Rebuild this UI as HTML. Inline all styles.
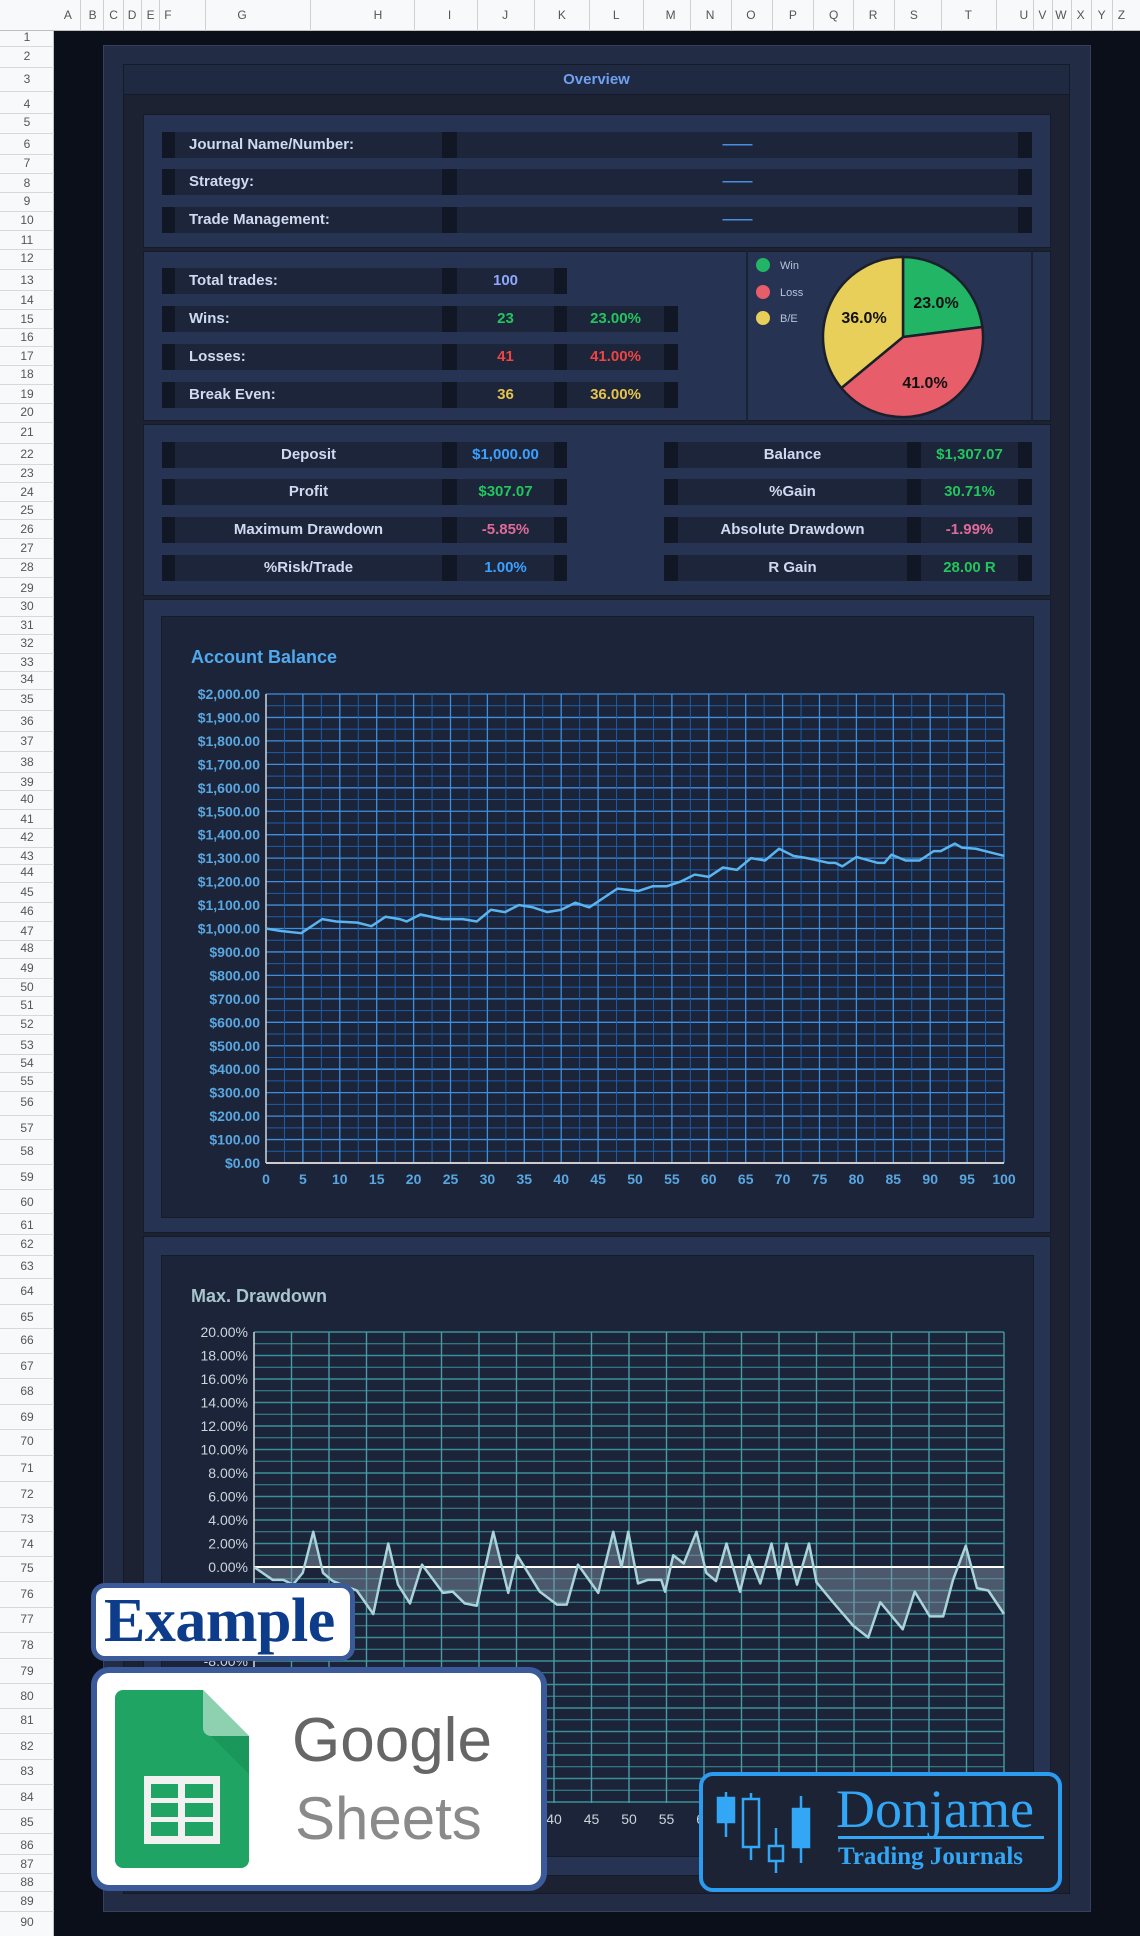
<!DOCTYPE html>
<html><head><meta charset="utf-8">
<style>
*{margin:0;padding:0;box-sizing:border-box}
body{width:1140px;height:1936px;overflow:hidden;background:#0b0f19;font-family:"Liberation Sans",Arial,sans-serif;position:relative}
.a{position:absolute}
.hdr{left:0;top:0;width:1140px;height:31px;background:#f8f9fa;border-bottom:1px solid #c0c0c0}
.rn{left:0;top:31px;width:54px;height:1905px;background:#f8f9fa;border-right:1px solid #c0c0c0}
.cl{font-size:12px;color:#555;top:8px;transform:translateX(-50%)}
.rl{font-size:12px;color:#555;width:54px;text-align:center;transform:translateY(-50%)}
.cap{background:#111725}
.cell{background:#1c2539}
.lbl{color:#cfdaf0;font-weight:bold;font-size:15px;line-height:26px}
.v{font-weight:bold;font-size:15px;line-height:26px;text-align:center}
</style></head><body>
<div class="a hdr" id="hdr"></div>
<div class="a rn" id="rn"></div>
<div class="a" style="left:103px;top:45px;width:988px;height:1867px;background:#222c44;border:1px solid #34405e"></div>
<div class="a" style="left:123px;top:64px;width:947px;height:1830px;background:#1c2232;border:1px solid #151a26"></div>
<div class="a" style="left:123px;top:64px;width:947px;height:31px;background:#1f2a42;border:1px solid #141a28;color:#6ea0f0;font-weight:bold;font-size:15px;text-align:center;line-height:30px">Overview</div>
<div class="a" style="left:143px;top:114px;width:908px;height:134px;background:#263352;border:1px solid #151b29"></div>
<div class="a" style="left:143px;top:251px;width:908px;height:170px;background:#263352;border:1px solid #151b29"></div>
<div class="a" style="left:746px;top:251px;width:2px;height:170px;background:#1a2236"></div>
<div class="a" style="left:1031px;top:251px;width:2px;height:170px;background:#1a2236"></div>
<div class="a" style="left:143px;top:424px;width:908px;height:172px;background:#263352;border:1px solid #151b29"></div>
<div class="a" style="left:143px;top:599px;width:908px;height:634px;background:#263352;border:1px solid #151b29"></div>
<div class="a" style="left:143px;top:1236px;width:908px;height:640px;background:#263352;border:1px solid #151b29"></div>
<div class="a" style="left:161px;top:616px;width:873px;height:602px;background:#1b2439;border:1px solid #151b29"></div>
<div class="a" style="left:161px;top:1255px;width:873px;height:602px;background:#1b2439;border:1px solid #151b29"></div>
<div id="rows"></div>
<svg class="a" style="left:0;top:0" width="1140" height="1936" id="sv" font-family="Liberation Sans, Arial, sans-serif"></svg>

<div class="a" style="left:91px;top:1583px;width:264px;height:78px;background:#fff;border:5px solid #3b5a9a;border-radius:14px;font-family:'Liberation Serif',serif;font-weight:bold;font-size:62px;color:#0d3d8a;line-height:66px;padding-left:8px;letter-spacing:-0.5px">Example</div>
<div class="a" style="left:91px;top:1667px;width:456px;height:224px;background:#fff;border:6px solid #3b5a9a;border-radius:18px"></div>
<svg class="a" style="left:115px;top:1690px" width="136" height="180" viewBox="0 0 136 180">
<path d="M8 0 H88 L134 46 V170 a8 8 0 0 1 -8 8 H8 a8 8 0 0 1 -8 -8 V8 a8 8 0 0 1 8 -8z" fill="#1fa463"/>
<path d="M88 0 V38 a8 8 0 0 0 8 8 H134z" fill="#8ed1b1"/>
<path d="M96 46 L134 84 V46z" fill="#178f55" opacity=".6"/>
<rect x="29" y="86" width="76" height="68" fill="#f1f1f1"/>
<rect x="36" y="94" width="27" height="14" fill="#1fa463"/><rect x="70" y="94" width="28" height="14" fill="#1fa463"/>
<rect x="36" y="113" width="27" height="14" fill="#1fa463"/><rect x="70" y="113" width="28" height="14" fill="#1fa463"/>
<rect x="36" y="132" width="27" height="14" fill="#1fa463"/><rect x="70" y="132" width="28" height="14" fill="#1fa463"/>
</svg>
<div class="a" style="left:292px;top:1706px;font-size:62px;color:#666;line-height:70px">Google</div>
<div class="a" style="left:295px;top:1784px;font-size:60px;color:#8a8a8a;line-height:70px">Sheets</div>
<div class="a" style="left:699px;top:1772px;width:363px;height:120px;background:#1b2335;border:4px solid #2b9cf0;border-radius:14px"></div>
<svg class="a" style="left:712px;top:1790px" width="110" height="90" viewBox="0 0 110 90" stroke="#33a6f5" stroke-width="2.5" fill="none">
<line x1="14" y1="2" x2="14" y2="47"/><rect x="6" y="8" width="16" height="24" fill="#33a6f5"/>
<line x1="39" y1="3" x2="39" y2="70"/><rect x="31" y="9" width="16" height="48" fill="#1b2335"/>
<line x1="64" y1="38" x2="64" y2="83"/><rect x="57" y="56" width="14" height="15" fill="#1b2335"/>
<line x1="89" y1="6" x2="89" y2="73"/><rect x="81" y="19" width="16" height="38" fill="#33a6f5"/>
</svg>
<div class="a" style="left:836px;top:1780px;font-family:'Liberation Serif',serif;font-size:54px;color:#33a6f5;line-height:58px">Donjame</div>
<div class="a" style="left:838px;top:1836px;width:206px;height:3px;background:#33a6f5"></div>
<div class="a" style="left:838px;top:1840px;font-family:'Liberation Serif',serif;font-weight:bold;font-size:25px;color:#33a6f5;line-height:34px">Trading Journals</div>

<script>
const S=1.235;
const cols=[["A",55],["B",75],["C",92],["D",107],["E",122],["F",136],["G",196],["H",306],["I",364],["J",409],["K",455],["L",499],["M",543],["N",575],["O",608],["P",642],["Q",675],["R",707],["S",740],["T",784],["U",829],["V",844],["W",859],["X",875],["Y",892],["Z",908]];
let h='';
cols.forEach((c,i)=>{h+=`<div class="a cl" style="left:${c[1]*S}px">${c[0]}</div>`;
 if(i<cols.length-1){const m=(c[1]+cols[i+1][1])/2*S;h+=`<div class="a" style="left:${m}px;top:0;width:1px;height:31px;background:#d0d0d0"></div>`;}});
document.getElementById('hdr').innerHTML=h;
const rc=[30,45,64,84,99,117,132,148,163,178,194,209,227,243,258,273,288,303,319,334,350,368,383,398,413,428,444,459,476,491,506,521,536,550,566,584,600,617,633,647,663,678,693,706,722,738,754,768,784,799,814,829,846,861,875,892,913,932,953,973,992,1007,1025,1045,1066,1085,1106,1126,1147,1167,1189,1210,1230,1250,1270,1291,1311,1332,1353,1373,1393,1414,1434,1455,1475,1494,1509,1524,1539,1556];
h='';
rc.forEach((y,i)=>{h+=`<div class="a rl" style="top:${y*S-31}px">${i+1}</div>`;
 if(i<rc.length-1){const m=(y+rc[i+1])/2*S-31;h+=`<div class="a" style="left:0;top:${m}px;width:54px;height:1px;background:#d8d8d8"></div>`;}});
document.getElementById('rn').innerHTML=h;
h='';
function seg(x1,x2,y,cls){return `<div class="a ${cls}" style="left:${x1}px;top:${y}px;width:${x2-x1}px;height:26px"></div>`}
function txt(x1,x2,y,t,col,align){return `<div class="a ${align=='l'?'lbl':'v'}" style="left:${x1}px;top:${y}px;width:${x2-x1}px;${align=='c'?'text-align:center;':''}color:${col}">${t}</div>`}
[["Journal Name/Number:",132],["Strategy:",169],["Trade Management:",207]].forEach(r=>{const y=r[1];
 h+=seg(162,175,y,'cap')+seg(175,442,y,'cell')+seg(442,457,y,'cap')+seg(457,1018,y,'cell')+seg(1018,1032,y,'cap');
 h+=`<div class="a lbl" style="left:189px;top:${y}px">${r[0]}</div>`+txt(457,1018,y,'——','#4a90e2','c');});
h+=seg(162,175,268,'cap')+seg(175,442,268,'cell')+seg(442,457,268,'cap')+seg(457,554,268,'cell')+seg(554,567,268,'cap');
h+=`<div class="a lbl" style="left:189px;top:268px">Total trades:</div>`+txt(457,554,268,'100','#8fa8ff','c');
[["Wins:",306,"23","23.00%","#22c55e"],["Losses:",344,"41","41.00%","#ef4444"],["Break Even:",382,"36","36.00%","#e6c34a"]].forEach(r=>{const y=r[1];
 h+=seg(162,175,y,'cap')+seg(175,442,y,'cell')+seg(442,457,y,'cap')+seg(457,554,y,'cell')+seg(554,567,y,'cap')+seg(567,664,y,'cell')+seg(664,678,y,'cap');
 h+=`<div class="a lbl" style="left:189px;top:${y}px">${r[0]}</div>`+txt(457,554,y,r[2],r[4],'c')+txt(567,664,y,r[3],r[4],'c');});
const st=[[442,"Deposit","$1,000.00","#3ba0ff","Balance","$1,307.07","#22c55e"],[479,"Profit","$307.07","#22c55e","%Gain","30.71%","#22c55e"],[517,"Maximum Drawdown","-5.85%","#e06b9a","Absolute Drawdown","-1.99%","#e06b9a"],[555,"%Risk/Trade","1.00%","#3ba0ff","R Gain","28.00 R","#22c55e"]];
st.forEach(r=>{const y=r[0];
 h+=seg(162,175,y,'cap')+seg(175,442,y,'cell')+seg(442,457,y,'cap')+seg(457,554,y,'cell')+seg(554,567,y,'cap');
 h+=seg(664,678,y,'cap')+seg(678,907,y,'cell')+seg(907,921,y,'cap')+seg(921,1018,y,'cell')+seg(1018,1032,y,'cap');
 h+=txt(175,442,y,r[1],'#cfdaf0','c')+txt(457,554,y,r[2],r[3],'c')+txt(678,907,y,r[4],'#cfdaf0','c')+txt(921,1018,y,r[5],r[6],'c');});
document.getElementById('rows').innerHTML=h;
let s='';
const cx=903,cy=337,R=80;
function pt(a){const r=(a-90)*Math.PI/180;return [cx+R*Math.cos(r),cy+R*Math.sin(r)]}
function sl(a1,a2,c){const p1=pt(a1),p2=pt(a2);return `<path d="M${cx} ${cy} L${p1} A${R} ${R} 0 ${a2-a1>180?1:0} 1 ${p2}Z" fill="${c}" stroke="#1a1f2c" stroke-width="2.5"/>`}
s+=sl(0,82.8,'#22b565')+sl(82.8,230.4,'#e85d6a')+sl(230.4,360,'#e8cf5a');
s+=`<g font-weight="bold" font-size="16" fill="#111"><text x="936" y="308" text-anchor="middle">23.0%</text><text x="925" y="388" text-anchor="middle">41.0%</text><text x="864" y="323" text-anchor="middle">36.0%</text></g>`;
[["Win",265,'#22b565'],["Loss",292,'#e85d6a'],["B/E",318,'#e8cf5a']].forEach(l=>{s+=`<circle cx="763" cy="${l[1]}" r="7" fill="${l[2]}"/><text x="780" y="${l[1]+4}" font-size="11" fill="#b8c4dc">${l[0]}</text>`});
const L=266,Rr=1004,T=694,B=1163;
s+=`<text x="191" y="663" font-size="18" font-weight="bold" fill="#4fa9ee">Account Balance</text>`;
for(let i=0;i<=40;i++){const y=T+(B-T)*i/40;s+=`<line x1="${L}" x2="${Rr}" y1="${y}" y2="${y}" stroke="${i%2?'#1f5ea8':'#3f8fe0'}" stroke-width="${i%2?1:1.3}"/>`}
for(let i=0;i<=40;i++){const x=L+(Rr-L)*i/40;s+=`<line y1="${T}" y2="${B}" x1="${x}" x2="${x}" stroke="${i%2?'#1f5ea8':'#3f8fe0'}" stroke-width="${i%2?1:1.3}"/>`}
s+=`<line x1="${L}" x2="${Rr}" y1="${B}" y2="${B}" stroke="#ccc" stroke-width="2"/><line x1="${L}" x2="${L}" y1="${T}" y2="${B}" stroke="#ccc" stroke-width="1.5"/>`;
for(let i=0;i<=20;i++){const v=2000-i*100;const y=T+(B-T)*i/20;s+=`<text x="${L-6}" y="${y+5}" text-anchor="end" font-size="14" font-weight="bold" fill="#5aa6e0">$${v.toLocaleString('en-US')}.00</text>`}
for(let i=0;i<=20;i++){const x=L+(Rr-L)*i/20;s+=`<text x="${x}" y="${B+21}" text-anchor="middle" font-size="14" font-weight="bold" fill="#5aa6e0">${i*5}</text>`}
const bal=[[0,1000],[2,990],[5,980],[8,1040],[10,1030],[13,1025],[15,1010],[17,1050],[19,1040],[20,1030],[22,1060],[25,1040],[28,1040],[30,1030],[32,1080],[34,1070],[36,1100],[38,1090],[40,1070],[42,1080],[44,1110],[46,1090],[48,1130],[50,1170],[53,1160],[55,1180],[57,1180],[59,1200],[61,1230],[63,1220],[65,1260],[67,1250],[69,1300],[71,1290],[73,1340],[75,1310],[77,1300],[80,1280],[81,1280],[82,1265],[84,1305],[87,1280],[88,1280],[89,1315],[91,1290],[93,1290],[95,1330],[96,1330],[98,1362],[99,1345],[101,1340],[103,1325],[105,1310]];
s+=`<polyline fill="none" stroke="#5ab4f0" stroke-width="2.5" stroke-linejoin="round" points="${bal.map(p=>[L+(Rr-L)*p[0]/105,T+(B-T)*(2000-p[1])/2000].join(',')).join(' ')}"/>`;
const L2=254,R2=1004,T2=1332,Z=1567,B2=1803,u=(Z-T2)/20;
s+=`<text x="191" y="1302" font-size="18" font-weight="bold" fill="#a9c4cc">Max. Drawdown</text>`;
for(let i=0;i<=40;i++){const y=T2+u*i;s+=`<line x1="${L2}" x2="${R2}" y1="${y}" y2="${y}" stroke="#3a8e98" stroke-width="${i%2?1:1.4}"/>`}
for(let i=0;i<=20;i++){const x=L2+(R2-L2)*i/20;s+=`<line y1="${T2}" y2="${B2}" x1="${x}" x2="${x}" stroke="#4a9aa4" stroke-width="1.4"/>`}
s+=`<line x1="${L2}" x2="${L2}" y1="${T2}" y2="${B2}" stroke="#ccc" stroke-width="1.5"/>`;
for(let i=0;i<=20;i++){const v=20-i*2;const y=T2+u*2*i;s+=`<text x="${L2-6}" y="${y+5}" text-anchor="end" font-size="14" fill="#c9d6dc">${v.toFixed(2)}%</text>`}
for(let i=0;i<=20;i++){const x=L2+(R2-L2)*i/20;s+=`<text x="${x}" y="${B2+21}" text-anchor="middle" font-size="14" fill="#c9d6dc">${i*5}</text>`}
const dd=[[0,0],[2.5,-1.1],[3.9,-1.1],[5.2,-1.5],[6.5,-0.5],[7.9,3],[9.2,-0.5],[10.5,-1.2],[13.7,-2],[15.9,-4],[17.9,2],[19.2,-1.5],[20.8,-3.1],[22.4,0.2],[25.2,-2.2],[26.5,-2.1],[28.1,-3.1],[29.7,-3.3],[31.9,3],[33.9,-2.2],[35.1,1],[38.1,-2.1],[40.4,-3.2],[41.7,-3.2],[43.2,0.2],[45.9,-2.2],[47.9,3],[49,0],[49.9,3],[51.2,-1.4],[52.5,-1.1],[54.3,-1.1],[54.8,-2.1],[55.9,1],[57.3,0.3],[59,3],[60.3,-0.5],[61.6,-1.2],[63,2],[64.8,-2.1],[66,1],[67.5,-1.4],[69,2],[70,-1],[71,2],[72.4,-1.5],[74,2],[75,-1.3],[77.2,-3],[79.9,-5],[81.9,-6],[83.5,-3],[86.5,-5.3],[88.1,-2.1],[90.1,-4.2],[91.9,-4.2],[93.2,-1.1],[94.9,1.8],[96.4,-1.8],[97.9,-2],[100,-4]];
const P=dd.map(p=>[L2+(R2-L2)*p[0]/100,Z-u*p[1]]);
s+=`<path d="M${L2} ${Z} L${P.map(p=>p.join(' ')).join(' L')} L${R2} ${Z}Z" fill="#8a98a8" fill-opacity=".45"/>`;
s+=`<line x1="${L2}" x2="${R2}" y1="${Z}" y2="${Z}" stroke="#fff" stroke-width="2"/>`;
s+=`<polyline fill="none" stroke="#a8d4da" stroke-width="2.5" stroke-linejoin="round" points="${P.map(p=>p.join(',')).join(' ')}"/>`;
document.getElementById('sv').innerHTML=s;
</script>
</body></html>
